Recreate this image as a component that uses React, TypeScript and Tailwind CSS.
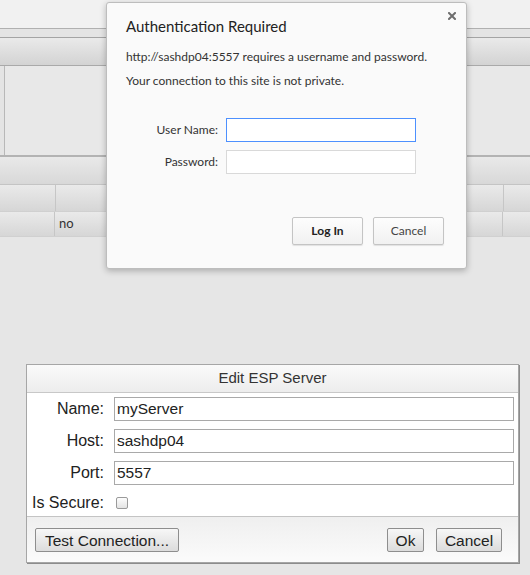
import React from "react";

function BackgroundApp() {
  return (
    <div className="w-full">
      <div className="h-[29px] bg-[#f1f1f1] border-b border-[#b0b0b0]" />
      <div className="h-[9px] bg-[#e4e4e4] border-b border-[#a4a4a4]" />
      <div className="h-[28px] bg-linear-to-b from-[#eaeaea] to-[#d3d3d3] border-b border-[#a9a9a9]" />
      <div className="h-[91px] flex border-b-2 border-[#b3b3b3]">
        <div className="w-[5px] border-r border-[#b8b8b8] bg-[#e4e4e4]" />
        <div className="flex-1 bg-[#e8e8e8]" />
      </div>
      <div className="h-[28px] bg-linear-to-b from-[#e9e9e9] to-[#d8d8d8] border-b border-[#c4c4c4]" />
      <div className="h-[27px] flex border-b border-[#d0d0d0] bg-linear-to-b from-[#eaeaea] to-[#d6d6d6]">
        <div className="w-[56px] border-r border-[#c6c6c6]" />
        <div className="flex-1 border-r border-[#c6c6c6]" />
        <div className="w-[26px]" />
      </div>
      <div className="h-[25px] flex border-b border-[#d0d0d0] bg-linear-to-b from-[#eaeaea] to-[#d6d6d6]">
        <div className="w-[55px] border-r border-[#c6c6c6]" />
        <div className="flex-1 border-r border-[#c6c6c6] pl-[4px] flex items-center text-[13px] text-[#333]">
          no
        </div>
        <div className="w-[27px]" />
      </div>
    </div>
  );
}

function AuthDialog() {
  return (
    <div className="absolute left-[106px] top-[2px] w-[361px] h-[267px] bg-[#fafafa] border border-[#bdbdbd] rounded-[3px] shadow-[0_2px_6px_rgba(0,0,0,0.25)] pt-[13px] pl-[19px] pr-[22px] flex flex-col font-['Lato',sans-serif]">
      <button className="absolute top-[9px] right-[10px] w-[8px] h-[8px]">
        <svg viewBox="0 0 8 8" width="8" height="8">
          <path d="M1 1L7 7M7 1L1 7" stroke="#6e6e6e" strokeWidth="2" strokeLinecap="square" />
        </svg>
      </button>
      <div className="text-[15px] leading-[20px] text-[#222]">Authentication Required</div>
      <p className="mt-[13px] text-[12px] leading-[16px] text-[#333]">
        http://sashdp04:5557 requires a username and password.
      </p>
      <p className="mt-[8px] text-[12px] leading-[16px] text-[#333]">
        Your connection to this site is not private.
      </p>
      <div className="mt-[29px] flex items-center">
        <label className="w-[92px] text-right text-[12px] text-[#333]">User Name:</label>
        <input className="ml-[8px] w-[190px] h-[24px] bg-white border border-[#4d90fe] outline-none" />
      </div>
      <div className="mt-[8px] flex items-center">
        <label className="w-[92px] text-right text-[12px] text-[#333]">Password:</label>
        <input type="password" className="ml-[8px] w-[190px] h-[24px] bg-white border border-[#d9d9d9] outline-none" />
      </div>
      <div className="mt-[43px] flex justify-end gap-[10px]">
        <button className="w-[71px] h-[28px] border border-[#c4c4c4] rounded-[2px] bg-linear-to-b from-[#fdfdfd] to-[#f1f1f1] shadow-[0_1px_1px_rgba(0,0,0,0.1)] text-[12px] font-bold text-[#222]">
          Log In
        </button>
        <button className="w-[71px] h-[28px] border border-[#c4c4c4] rounded-[2px] bg-linear-to-b from-[#fdfdfd] to-[#f1f1f1] shadow-[0_1px_1px_rgba(0,0,0,0.1)] text-[12px] text-[#444]">
          Cancel
        </button>
      </div>
    </div>
  );
}

function FieldRow({ label, value }: { label: string; value: string }) {
  return (
    <div className="h-[32px] flex items-center">
      <span className="w-[77px] text-right text-[16px] text-[#222]">{label}</span>
      <input
        defaultValue={value}
        className="ml-[10px] mr-[4px] flex-1 min-w-0 h-[24px] border border-[#a9a9a9] px-[2px] text-[15.5px] text-[#222] outline-none"
      />
    </div>
  );
}

function EspDialog() {
  return (
    <div className="ml-[26px] mt-[127px] w-[493px] border border-[#a6a6a6] shadow-[1px_1px_0_#8c8c8c] bg-white font-['Liberation_Sans',Arial,sans-serif]">
      <div className="h-[28px] border-b border-[#c8c8c8] bg-linear-to-b from-[#fafafa] to-[#ededed] flex items-center justify-center text-[15px] text-[#333]">
        Edit ESP Server
      </div>
      <FieldRow label="Name:" value="myServer" />
      <FieldRow label="Host:" value="sashdp04" />
      <FieldRow label="Port:" value="5557" />
      <div className="h-[27px] flex items-center">
        <span className="w-[77px] text-right text-[16px] text-[#222]">Is Secure:</span>
        <span className="ml-[12px] w-[12px] h-[12px] rounded-[2px] border border-[#9a9a9a] bg-linear-to-b from-[#fdfdfd] to-[#e4e4e4]" />
      </div>
      <div className="border-t border-[#c4c4c4] bg-linear-to-b from-[#efefef] to-[#fbfbfb] pt-[11px] pb-[10px] pl-[8px] pr-[16px] flex items-center">
        <button className="w-[144px] h-[24px] border border-[#8e8e8e] rounded-[2px] bg-linear-to-b from-[#f7f7f7] to-[#dcdcdc] text-[15.5px] text-[#222]">
          Test Connection...
        </button>
        <div className="flex-1" />
        <button className="w-[37px] h-[24px] border border-[#8e8e8e] rounded-[2px] bg-linear-to-b from-[#f7f7f7] to-[#dcdcdc] text-[15.5px] text-[#222]">
          Ok
        </button>
        <button className="ml-[12px] w-[66px] h-[24px] border border-[#8e8e8e] rounded-[2px] bg-linear-to-b from-[#f7f7f7] to-[#dcdcdc] text-[15.5px] text-[#222]">
          Cancel
        </button>
      </div>
    </div>
  );
}

export default function App() {
  return (
    <div className="relative w-[530px] h-[575px] overflow-hidden bg-[#e6e6e6] font-['Lato',sans-serif]">
      <BackgroundApp />
      <EspDialog />
      <AuthDialog />
    </div>
  );
}
